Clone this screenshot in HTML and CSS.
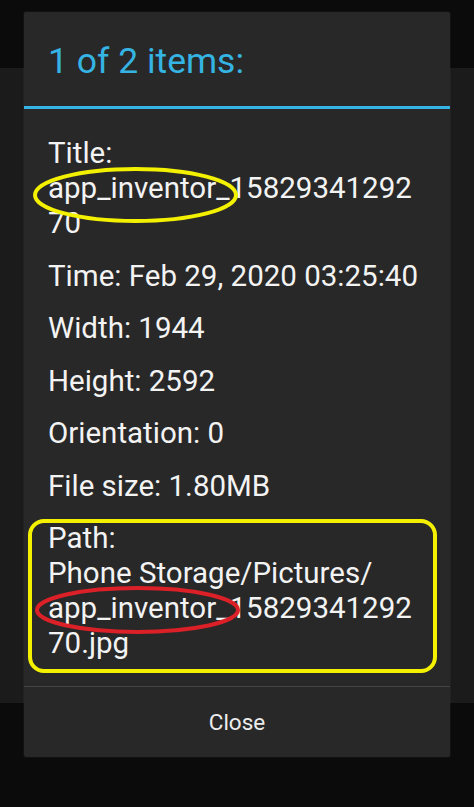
FILE: index.html
```html
<!DOCTYPE html>
<html>
<head>
<meta charset="utf-8">
<link rel="stylesheet" href="styles.css">
</head>
<body>
<div class="dialog">
  <div class="header">
    <h1 class="title">1 of 2 items:</h1>
  </div>
  <div class="content">
    <p class="item">Title:<br>app_inventor_15829341292<br>70</p>
    <p class="item">Time: Feb 29, 2020 03:25:40</p>
    <p class="item">Width: 1944</p>
    <p class="item">Height: 2592</p>
    <p class="item">Orientation: 0</p>
    <p class="item">File size: 1.80MB</p>
    <p class="item">Path:<br>Phone Storage/Pictures/<br>app_inventor_15829341292<br>70.jpg</p>
  </div>
  <div class="actions">
    <button class="btn">Close</button>
  </div>
</div>
<svg class="annotations" width="474" height="807" viewBox="0 0 474 807">
  <ellipse cx="135.5" cy="195" rx="100.5" ry="26" fill="none" stroke="#f3f000" stroke-width="4"/>
  <rect x="30" y="521" width="405" height="150" rx="14" ry="14" fill="none" stroke="#f3f000" stroke-width="4"/>
  <ellipse cx="137.5" cy="610" rx="100.5" ry="22" fill="none" stroke="#db2028" stroke-width="4"/>
</svg>
</body>
</html>
```
FILE: styles.css
```css
html, body {
  margin: 0;
  padding: 0;
}
body {
  width: 474px;
  height: 807px;
  overflow: hidden;
  position: relative;
  font-family: Roboto, "Noto Sans", sans-serif;
  background: linear-gradient(to bottom, #0b0b0b 0, #0b0b0b 68px, #1b1b1b 68px, #1b1b1b 703px, #0b0b0b 703px);
  padding-top: 12px;
  box-sizing: border-box;
}
.dialog {
  width: 426px;
  margin: 0 24px;
  background: #282828;
  border-radius: 2px;
  box-shadow: 0 0 0 1px rgba(255,255,255,0.03);
}
.header {
  height: 90px;
  padding-top: 4px;
  border-bottom: 3px solid #33b5e5;
  padding-left: 24px;
}
.title {
  margin: 0;
  font-weight: 400;
  font-size: 35.5px;
  line-height: 90px;
  color: #35b4e3;
}
.content {
  padding: 27px 24px 25px;
  display: flex;
  flex-direction: column;
  gap: 17.5px;
  border-bottom: 1px solid #434343;
}
.item {
  margin: 0;
  font-size: 29.5px;
  line-height: 35px;
  color: #f3f3f3;
  white-space: nowrap;
}
.actions {
  height: 70px;
  display: flex;
}
.btn {
  flex: 1;
  background: transparent;
  border: 0;
  font-family: Roboto, "Noto Sans", sans-serif;
  font-size: 22.5px;
  line-height: 70px;
  padding: 0;
  color: #ececec;
}
.annotations {
  position: absolute;
  left: 0;
  top: 0;
  pointer-events: none;
}
```
